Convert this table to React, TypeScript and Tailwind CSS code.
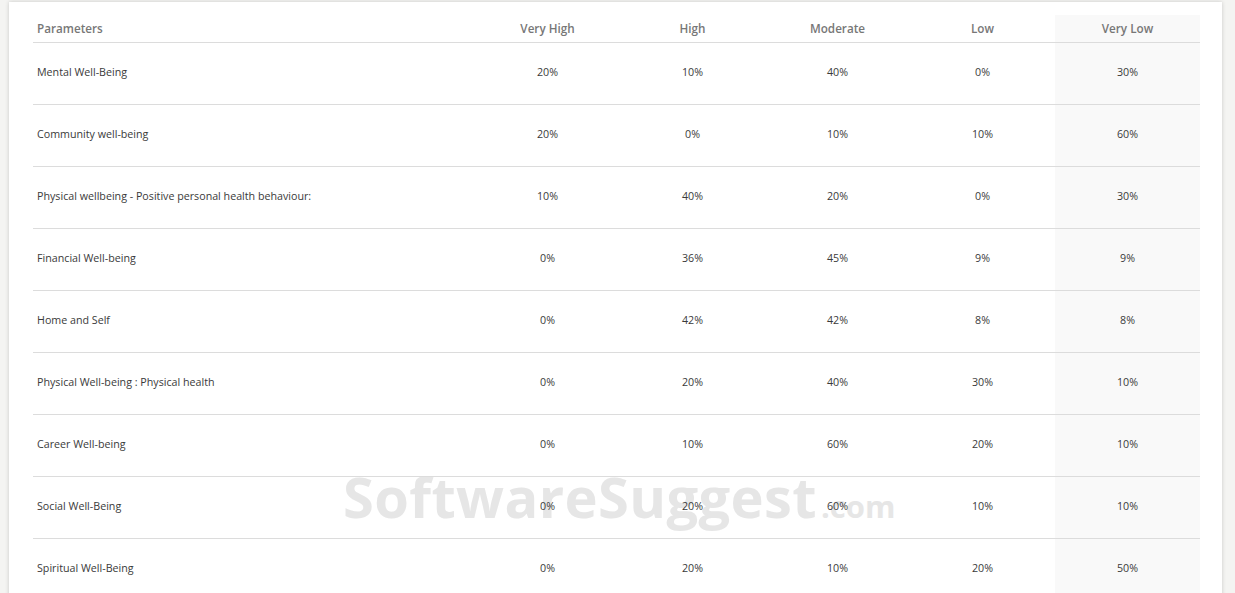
const columns = ["Very High", "High", "Moderate", "Low", "Very Low"];

const rows: { name: string; values: string[] }[] = [
  { name: "Mental Well-Being", values: ["20%", "10%", "40%", "0%", "30%"] },
  { name: "Community well-being", values: ["20%", "0%", "10%", "10%", "60%"] },
  {
    name: "Physical wellbeing - Positive personal health behaviour:",
    values: ["10%", "40%", "20%", "0%", "30%"],
  },
  { name: "Financial Well-being", values: ["0%", "36%", "45%", "9%", "9%"] },
  { name: "Home and Self", values: ["0%", "42%", "42%", "8%", "8%"] },
  {
    name: "Physical Well-being : Physical health",
    values: ["0%", "20%", "40%", "30%", "10%"],
  },
  { name: "Career Well-being", values: ["0%", "10%", "60%", "20%", "10%"] },
  { name: "Social Well-Being", values: ["0%", "20%", "60%", "10%", "10%"] },
  { name: "Spiritual Well-Being", values: ["0%", "20%", "10%", "20%", "50%"] },
];

export default function App() {
  return (
    <div
      className="h-[593px] w-[1235px] overflow-hidden bg-[#f4f4f2] pl-[9px] pt-[2px]"
      style={{ fontFamily: '"Open Sans", "Noto Sans", sans-serif' }}
    >
      <div className="relative h-[620px] w-[1213px] bg-white pl-[24px] pr-[22px] pt-[13px] shadow-[0_0_4px_rgba(0,0,0,0.18)]">
        {/* watermark sits under the table text */}
        <div className="pointer-events-none absolute left-[334px] top-[466px] flex items-baseline font-bold text-[#e6e6e6]">
          <span className="text-[56px] leading-none tracking-[0.4px]">SoftwareSuggest</span>
          <span className="ml-[4px] text-[31px] leading-none">.com</span>
        </div>

        <table className="relative w-[1167px] table-fixed border-collapse">
          <colgroup>
            <col className="w-[442px]" />
            <col className="w-[145px]" />
            <col className="w-[145px]" />
            <col className="w-[145px]" />
            <col className="w-[145px]" />
            <col className="w-[145px]" />
          </colgroup>
          <thead>
            <tr className="h-[27px] border-b border-[#dcdcdc]">
              <th className="pl-[4px] pt-[2px] text-left text-[11.7px] font-semibold text-[#777]">
                Parameters
              </th>
              {columns.map((c, i) => (
                <th
                  key={c}
                  className={
                    "pt-[2px] text-center text-[11.7px] font-semibold text-[#777] " +
                    (i === 4 ? "bg-[#f9f9f9]" : "")
                  }
                >
                  {c}
                </th>
              ))}
            </tr>
          </thead>
          <tbody>
            {rows.map((r) => (
              <tr key={r.name} className="h-[62px] border-b border-[#dcdcdc]">
                <td className="pb-[1px] pl-[4px] text-left text-[10.7px] text-[#3a3a3a]">
                  {r.name}
                </td>
                {r.values.map((v, i) => (
                  <td
                    key={i}
                    className={
                      "pb-[1px] text-center text-[10.7px] text-[#3a3a3a] " +
                      (i === 4 ? "bg-[#f9f9f9]" : "")
                    }
                  >
                    {v}
                  </td>
                ))}
              </tr>
            ))}
          </tbody>
        </table>
      </div>
    </div>
  );
}
